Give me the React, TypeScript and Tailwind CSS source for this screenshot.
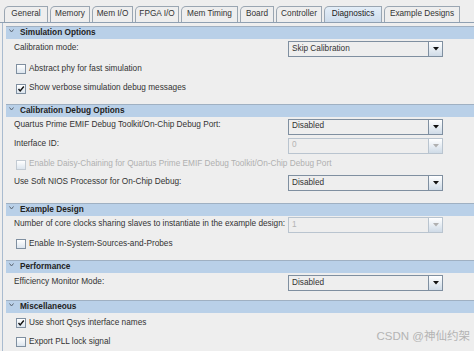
import React from 'react';

const tabs = [
  { label: 'General', w: 'w-[44px]' },
  { label: 'Memory', w: 'w-[40px]' },
  { label: 'Mem I/O', w: 'w-[41px]' },
  { label: 'FPGA I/O', w: 'w-[44px]' },
  { label: 'Mem Timing', w: 'w-[57px]' },
  { label: 'Board', w: 'w-[34px]' },
  { label: 'Controller', w: 'w-[46px]' },
  { label: 'Diagnostics', w: 'w-[58px]', active: true },
  { label: 'Example Designs', w: 'w-[76px]' },
];

function Header({ title }: { title: string }) {
  return (
    <div className="ml-[3px] h-[13px] border-t border-[#9fb0c2] bg-[#b9d0e8] flex items-center">
      <svg width="5" height="4" viewBox="0 0 5 4" className="ml-[3px] mb-[4px]">
        <path d="M0.5 0.5 L2.5 3 L4.5 0.5" fill="none" stroke="#5a6470" strokeWidth="1" />
      </svg>
      <span className="ml-[6px] font-bold text-[#222]">{title}</span>
    </div>
  );
}

function Combo({ value, disabled }: { value: string; disabled?: boolean }) {
  return (
    <div
      className={`w-[155px] h-[16px] flex border bg-[#eeeeee] ${
        disabled ? 'border-[#b9c4cf]' : 'border-[#7f8fa0]'
      }`}
    >
      <div className={`flex-1 flex items-center pl-[3px] ${disabled ? 'text-[#b4b4b4]' : 'text-[#333]'}`}>
        {value}
      </div>
      <div
        className={`w-[14px] flex items-center justify-center border-l bg-gradient-to-b from-white to-[#cfdbe7] ${
          disabled ? 'border-[#b9c4cf]' : 'border-[#7f8fa0]'
        }`}
      >
        <svg width="6" height="4" viewBox="0 0 6 4">
          <path d="M0 0 L6 0 L3 3.5 Z" fill={disabled ? '#b0b0b0' : '#111'} />
        </svg>
      </div>
    </div>
  );
}

function ComboRow({ label, value, disabled, h }: { label: string; value: string; disabled?: boolean; h: string }) {
  return (
    <div className={`${h} flex items-center pl-[11px]`}>
      <span className="flex-1 whitespace-nowrap text-[#333] mb-[2px]">{label}</span>
      <div className="mr-[31px]">
        <Combo value={value} disabled={disabled} />
      </div>
    </div>
  );
}

function Check({ label, checked, disabled, h }: { label: string; checked?: boolean; disabled?: boolean; h: string }) {
  return (
    <div className={`${h} flex items-center pl-[13px]`}>
      <div
        className={`w-[10px] h-[10px] border flex items-center justify-center bg-gradient-to-b from-white to-[#dce5ee] ${
          disabled ? 'border-[#c2cad2]' : 'border-[#7f8fa0]'
        }`}
      >
        {checked && (
          <svg width="8" height="8" viewBox="0 0 8 8">
            <path d="M1.5 4 L3.2 6 L6.8 1.5" fill="none" stroke="#111" strokeWidth="1.4" />
          </svg>
        )}
      </div>
      <span className={`ml-[3px] whitespace-nowrap ${disabled ? 'text-[#b0b0b0]' : 'text-[#333]'}`}>{label}</span>
    </div>
  );
}

export default function App() {
  return (
    <div className="relative w-[474px] h-[351px] overflow-hidden bg-[#eeeeee] text-[8.25px] leading-none font-['Liberation_Sans',Arial,sans-serif]">
      {/* tab strip */}
      <div className="h-[23px] pt-[7px] pl-[4px] flex items-end gap-[2px] border-b border-[#8fa0b2]">
        {tabs.map((t) => (
          <div
            key={t.label}
            className={`${t.w} h-[16px] flex items-center justify-center rounded-tl-[5px] border border-b-0 border-[#9aa6b2] ${
              t.active ? 'bg-gradient-to-b from-[#e4eef8] to-[#cddcec] text-[#222]' : 'bg-[#eeeeee] text-[#333]'
            }`}
          >
            {t.label}
          </div>
        ))}
      </div>

      <div className="ml-[2px] border-l border-[#a9bbcf] pt-[3px]">
        <Header title="Simulation Options" />
        <ComboRow h="h-[20px]" label="Calibration mode:" value="Skip Calibration" />
        <Check h="h-[20px]" label="Abstract phy for fast simulation" />
        <Check h="h-[19px]" label="Show verbose simulation debug messages" checked />
        <div className="h-[6px]" />

        <Header title="Calibration Debug Options" />
        <ComboRow h="h-[19px]" label="Quartus Prime EMIF Debug Toolkit/On-Chip Debug Port:" value="Disabled" />
        <ComboRow h="h-[19px]" label="Interface ID:" value="0" disabled />
        <Check h="h-[19px]" label="Enable Daisy-Chaining for Quartus Prime EMIF Debug Toolkit/On-Chip Debug Port" disabled />
        <ComboRow h="h-[18px]" label="Use Soft NIOS Processor for On-Chip Debug:" value="Disabled" />
        <div className="h-[11px]" />

        <Header title="Example Design" />
        <ComboRow h="h-[18px]" label="Number of core clocks sharing slaves to instantiate in the example design:" value="1" disabled />
        <Check h="h-[20px]" label="Enable In-System-Sources-and-Probes" />
        <div className="h-[6px]" />

        <Header title="Performance" />
        <ComboRow h="h-[20px]" label="Efficiency Monitor Mode:" value="Disabled" />
        <div className="h-[7px]" />

        <Header title="Miscellaneous" />
        <Check h="h-[20px]" label="Use short Qsys interface names" checked />
        <Check h="h-[18px]" label="Export PLL lock signal" />
      </div>

      <div className="absolute right-[4px] bottom-[9px] text-[11.5px] text-[#b4b4b4] font-['Liberation_Sans','Noto_Sans_CJK_SC',sans-serif]">
        CSDN @神仙约架
      </div>
    </div>
  );
}
